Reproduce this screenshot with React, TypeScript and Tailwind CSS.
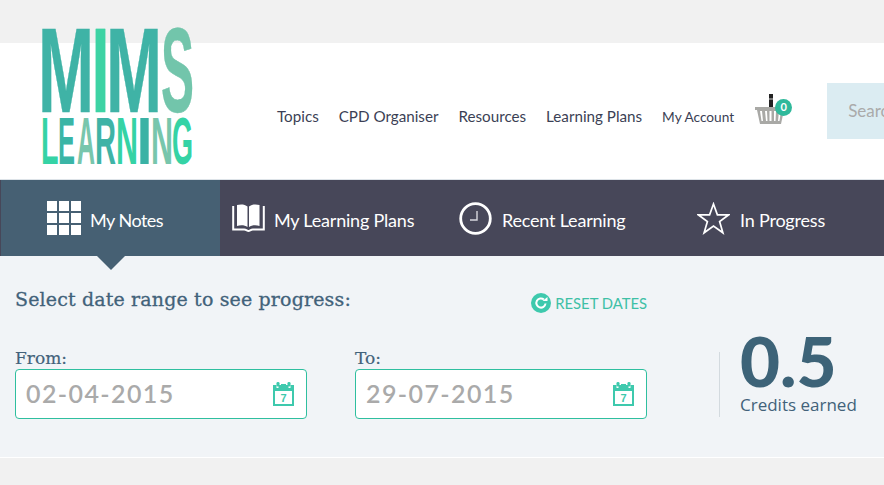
const sans = '[font-family:Lato,"Open_Sans",sans-serif]';

function Logo() {
  const top: [string, number, number, string][] = [
    ["M", -5, 56, "#3fb3a6"],
    ["I", 48.5, 18, "#3dd3a4"],
    ["M", 63, 56, "#3fb3a6"],
    ["S", 118, 33, "#72c5ab"],
  ];
  const bottom: [string, number, number, string][] = [
    ["L", -2, 17.5, "#35d3a5"],
    ["E", 15, 17, "#3ab5a6"],
    ["A", 34, 18, "#78c6ac"],
    ["R", 52, 21, "#3fb3a6"],
    ["N", 73, 22, "#35d3a5"],
    ["I", 93.5, 16, "#3ab2a5"],
    ["N", 108, 22, "#78c6ac"],
    ["G", 129, 21, "#35d3a5"],
  ];
  return (
    <svg width="150" height="140" viewBox="0 0 150 140" className="block overflow-visible">
      {top.map(([c, x, w, f], i) => (
        <text key={i} x={x} y="86" fontFamily="Liberation Sans" fontWeight="700" fontSize="121" textLength={w} lengthAdjust="spacingAndGlyphs" fill={f} stroke={f} strokeWidth="0.5">
          {c}
        </text>
      ))}
      {bottom.map(([c, x, w, f], i) => (
        <text key={i} x={x} y="138" fontFamily="Liberation Sans" fontWeight="700" fontSize="67" textLength={w} lengthAdjust="spacingAndGlyphs" fill={f}>
          {c}
        </text>
      ))}
    </svg>
  );
}

function Basket() {
  return (
    <div className="relative h-[32px] w-[36px]">
      <svg width="32" height="32" viewBox="0 0 32 32" className="absolute left-0 top-0">
        <rect x="14" y="1" width="4" height="15" fill="#222" />
        <rect x="14" y="5" width="4" height="2" fill="#777" />
        <path d="M0 14h31v3h-2l-3 14H5L2 17H0z" fill="#a9a9a6" />
        <g fill="#fff">
          <path d="M5 18h2l1 10H6.500zM10 18h2l.5 10H11zM14.500 18h2v10h-2zM19 18h2l-.5 10H19zM24 18h2l-1.500 10H23z" />
        </g>
      </svg>
      <div className="absolute left-[20px] top-[6px] flex h-[17px] w-[17px] items-center justify-center rounded-full bg-[#2fb99b] text-[11px] font-bold text-white [font-family:Lato,sans-serif]">
        0
      </div>
    </div>
  );
}

function GridIcon() {
  return (
    <div className="grid grid-cols-3 gap-[2px]">
      {Array.from({ length: 9 }).map((_, i) => (
        <div key={i} className="h-[10px] w-[10px] bg-white" />
      ))}
    </div>
  );
}

function BookIcon() {
  return (
    <svg width="33" height="30" viewBox="0 0 33 30">
      <path d="M5 2c3-1 8-1 10.500 1.500V24C13 22 8 22 5 23z M27.500 2c-3-1-8-1-10.500 1.500V24c2.500-2 7.500-2 10.500-1z" fill="#fff" />
      <path d="M1.200 3v23.500h11c2 0 3 1.500 4.300 1.500s2.300-1.500 4.300-1.500h11V3" fill="none" stroke="#fff" strokeWidth="2" />
    </svg>
  );
}

function ClockIcon() {
  return (
    <svg width="33" height="33" viewBox="0 0 33 33">
      <circle cx="16.500" cy="16.500" r="14.800" fill="none" stroke="#fff" strokeWidth="2.800" />
      <path d="M18 9v9h-7" fill="none" stroke="#d8d8de" strokeWidth="1.400" />
    </svg>
  );
}

function StarIcon() {
  return (
    <svg width="33" height="33" viewBox="0 0 33 33">
      <path d="M16.500 2l3.900 10.800h11.300l-9.100 6.800 3.300 11.200-9.400-6.700-9.400 6.700 3.300-11.200-9.100-6.800h11.300z" fill="none" stroke="#fff" strokeWidth="1.700" />
    </svg>
  );
}

function CalendarIcon() {
  return (
    <svg width="23" height="24" viewBox="0 0 23 24" className="shrink-0">
      <path d="M1 3h3.500v3h2V3H9V2h5v1h2.500v3h2V3H22v21H1z" fill="#3ec9ad" />
      <rect x="4.500" y="0" width="3" height="4.500" rx="1.300" fill="#3ec9ad" />
      <rect x="15.500" y="0" width="3" height="4.500" rx="1.300" fill="#3ec9ad" />
      <rect x="3" y="9" width="17" height="13" fill="#fff" />
      <text x="11.500" y="20" textAnchor="middle" fontFamily="Liberation Sans" fontWeight="700" fontSize="11" fill="#3ec9ad">7</text>
    </svg>
  );
}

function ResetIcon() {
  return (
    <svg width="20" height="20" viewBox="0 0 20 20" className="shrink-0">
      <circle cx="10" cy="10" r="10" fill="#3ec9ad" />
      <path d="M14.500 10.500a4.600 4.600 0 1 1-1.600-4" fill="none" stroke="#fff" strokeWidth="2" />
      <path d="M11.500 8h5V4z" fill="#fff" />
    </svg>
  );
}

function DateField({ label, value }: { label: string; value: string }) {
  return (
    <div className="w-[292px]">
      <div className="text-[17px] leading-[20px] text-[#42627a] [font-family:'DejaVu_Serif',serif] [-webkit-text-stroke:0.2px_#42627a]">{label}</div>
      <div className="mt-[1px] flex h-[50px] items-center justify-between rounded-[4px] border border-[#2fbf9f] bg-white pl-[10px] pr-[11px]">
        <span className={`text-[25px] font-semibold tracking-[1.400px] text-[#aaaaaa] ${sans}`}>{value}</span>
        <CalendarIcon />
      </div>
    </div>
  );
}

const links = ["Topics", "CPD Organiser", "Resources", "Learning Plans"];

export default function App() {
  return (
    <div className="relative h-[485px] w-[884px] overflow-hidden bg-[#f1f1f1]">
      <div className="absolute left-[43px] top-[26px] z-10">
        <Logo />
      </div>

      <div className="h-[43px]" />

      <header className="flex h-[136px] items-start bg-white pl-[277px]">
        <nav className={`flex items-baseline gap-[20px] whitespace-nowrap pt-[63px] text-[15.200px] leading-[20px] text-[#3b3f55] ${sans}`}>
          {links.map((l) => (
            <span key={l}>{l}</span>
          ))}
          <span className="text-[13.700px]">My Account</span>
        </nav>
        <div className="ml-[21px] mt-[50px]">
          <Basket />
        </div>
        <div className={`ml-[36px] mt-[40px] flex h-[56px] w-[100px] shrink-0 items-center bg-[#dbecf2] pl-[21px] text-[17px] text-[#aaaaaa] ${sans}`}>
          Search
        </div>
      </header>

      <nav className={`flex h-[77px] border-t border-[#dde3e8] bg-[#474759] pl-px text-[18px] tracking-[-0.2px] text-white ${sans}`}>
        <div className="relative flex w-[219px] items-center gap-[9px] bg-[#466073] pl-[46px]">
          <GridIcon />
          <span className="pt-[4px] tracking-[-0.5px]">My Notes</span>
          <div className="absolute left-[96px] top-[76px] h-0 w-0 border-x-[14px] border-t-[14px] border-x-transparent border-t-[#466073]" />
        </div>
        <div className="flex w-[219px] items-center gap-[9px] pl-[12px]">
          <BookIcon />
          <span className="pt-[4px]">My Learning Plans</span>
        </div>
        <div className="flex w-[219px] items-center gap-[10px] pl-[20px]">
          <ClockIcon />
          <span className="pt-[4px]">Recent Learning</span>
        </div>
        <div className="flex w-[219px] items-center gap-[10px] pl-[39px]">
          <StarIcon />
          <span className="pt-[4px]">In Progress</span>
        </div>
      </nav>

      <main className="flex h-[202px] border-b border-white bg-[#f1f4f7] pl-[15px]">
        <div className="w-[632px]">
          <div className="flex items-start justify-between pt-[30px]">
            <h2 className="whitespace-nowrap text-[19px] leading-[26px] tracking-[0.15px] text-[#42627a] [font-family:'DejaVu_Serif',serif] [-webkit-text-stroke:0.3px_#42627a]">
              Select date range to see progress:
            </h2>
            <div className={`mt-[6px] flex items-center gap-[4px] text-[14.800px] text-[#3ec0a6] ${sans}`}>
              <ResetIcon />
              <span>RESET DATES</span>
            </div>
          </div>
          <div className="mt-[34px] flex justify-between">
            <DateField label="From:" value="02-04-2015" />
            <DateField label="To:" value="29-07-2015" />
          </div>
        </div>
        <div className="ml-[72px] mt-[96px] h-[65px] w-px bg-[#d3dadf]" />
        <div className="ml-[20px] mt-[71px]">
          <div className="text-[69px] font-black leading-[68px] text-[#3d6378] [font-family:Lato,sans-serif]">0.5</div>
          <div className="text-[17px] leading-[20px] text-[#42627a] [font-family:'Open_Sans',sans-serif]">Credits earned</div>
        </div>
      </main>
    </div>
  );
}
